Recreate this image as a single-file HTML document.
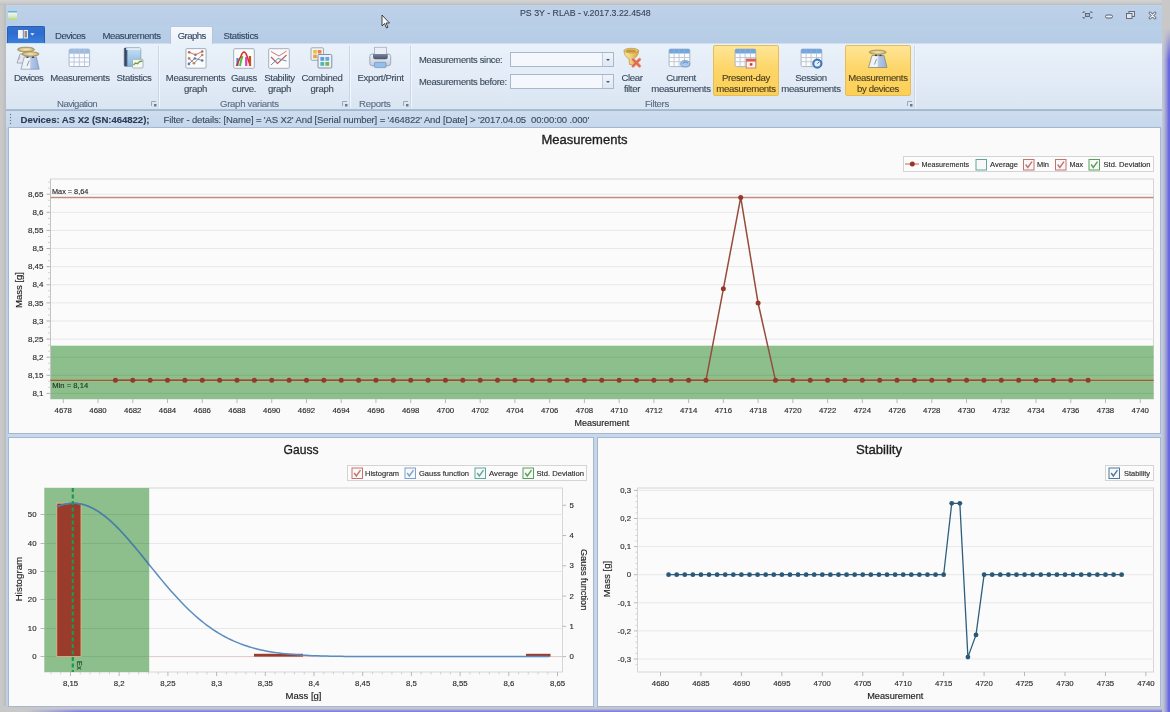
<!DOCTYPE html>
<html><head><meta charset="utf-8">
<style>
*{box-sizing:border-box;margin:0;padding:0}
html,body{width:1170px;height:712px;overflow:hidden;background:linear-gradient(to bottom,#d2d2d2 0,#c4c4c4 5px,#c8c8c8 40px);font-family:"Liberation Sans",sans-serif;color:#333}
.a{position:absolute}
#root{position:absolute;left:0;top:0;width:1170px;height:712px;will-change:transform}
.t{position:absolute;white-space:nowrap;line-height:1;-webkit-text-stroke:0.12px currentColor}
body{-webkit-font-smoothing:antialiased}
#rstrip{display:none}
#rstrip2{left:1162px;top:0;width:8px;height:712px;background:linear-gradient(to bottom,#c8c8c8 0,#c8c8c8 28px,rgba(200,200,200,0) 60px),linear-gradient(to right,#c6cad4 0,#b8bcd4 2px,#9494da 4.5px,#6c6ce0 6.5px,#6262e0 8px)}
#bstrip{left:0;top:706px;width:1162px;height:6px;background:linear-gradient(to right,#c8c8c8 0px,#c8c8c8 25px,rgba(200,200,200,0) 80px),linear-gradient(to bottom,rgba(200,200,204,0) 0px,rgba(196,198,210,0) 2.5px,#7474e2 6px),#c4c6d0}
#win{left:6px;top:5px;width:1156px;height:701px;background:#bcd0e8}
#title{left:6px;top:5px;width:1156px;height:20px;background:linear-gradient(to bottom,#bed2ea,#b8cde6)}
#tabs{left:6px;top:25px;width:1156px;height:18px;background:linear-gradient(to bottom,#bad0e8,#b6cce6)}
#ribbon{left:6px;top:43px;width:1156px;height:67px;background:linear-gradient(to bottom,#e9f1fa 0,#e3ecf7 50%,#dae5f2 100%);border-top:1px solid #d0dff0;border-bottom:1px solid #a9bdd6}
#status{left:6px;top:110px;width:1156px;height:18px;background:linear-gradient(to bottom,#cfdef0,#c5d7ec)}
.panel{position:absolute;background:#fafafa;border:1px solid #a6b6cc}
.sep{position:absolute;width:1px;background:#c8d6e8;box-shadow:1px 0 0 #f2f6fb}
.rb{font-size:9.6px;color:#3b4a5c;letter-spacing:-0.35px;text-align:center}
.gl{font-size:9.6px;color:#5a6c84;letter-spacing:-0.3px}
.ybtn{position:absolute;border:1px solid #e5bd5a;border-radius:2px;background:linear-gradient(to bottom,#fee596 0%,#fdd66a 45%,#fccf55 100%)}
</style></head>
<body><div id="root">
<div class="a" style="left:0;top:0;width:6px;height:712px;background:linear-gradient(to right,#cacaca 0,#c6c6c6 3px,#bababa 6px)"></div>
<div class="a" style="left:0;top:0;width:1170px;height:5px;background:linear-gradient(to bottom,#d4d4d4 0,#cacaca 3px,#bcbcbc 5px)"></div>
<div id="win" class="a"></div>
<div id="title" class="a"></div>
<div id="tabs" class="a"></div>
<div id="ribbon" class="a"></div>
<div id="status" class="a"></div>
<div id="rstrip2" class="a"></div>
<div id="rstrip" class="a"></div>
<div id="bstrip" class="a"></div>

<!-- title bar -->
<div class="a" style="left:8px;top:11px;width:9px;height:9px;background:linear-gradient(to bottom,#60b4dc 0,#60b4dc 1px,#eef6ea 2px,#dcecc8 5px,#b4d490 9px)"></div>
<div class="t" style="left:520px;top:9px;font-size:8.8px;color:#3a4656">PS 3Y - RLAB - v.2017.3.22.4548</div>


<!-- tabs -->
<div class="a" style="left:7px;top:26px;width:38px;height:17px;border-radius:2px 2px 0 0;background:linear-gradient(to bottom,#3472cc 0,#2d6cd0 40%,#3a80dc 100%);border:1px solid #2a5cb4;border-bottom:none"></div>
<svg class="a" style="left:17px;top:29px" width="20" height="11" viewBox="0 0 20 11">
 <rect x="1" y="1" width="5" height="8.5" fill="#f4f4f2"/>
 <rect x="6.5" y="1" width="4.5" height="8.5" fill="#f4f4f2"/>
 <rect x="7.5" y="2" width="2.6" height="6.5" fill="#8e8e88"/>
 <line x1="6.2" y1="1" x2="6.2" y2="9.5" stroke="#7a8090" stroke-width="0.6"/>
 <path d="M13.2 4.3 L17.6 4.3 L15.4 6.6 Z" fill="#e8f0fa"/>
</svg>
<div class="t" style="left:55px;top:30.5px;font-size:9.6px;color:#33475f;letter-spacing:-0.55px">Devices</div>
<div class="t" style="left:102.5px;top:30.5px;font-size:9.6px;color:#33475f;letter-spacing:-0.45px">Measurements</div>
<div class="a" style="left:170px;top:26px;width:43px;height:18px;border-radius:2px 2px 0 0;background:linear-gradient(to bottom,#f6f9fd,#eaf1f9);border:1px solid #b4c6dc;border-bottom:none"></div>
<div class="t" style="left:177.7px;top:30.5px;font-size:9.6px;color:#33475f;letter-spacing:-0.55px">Graphs</div>
<div class="t" style="left:223.4px;top:30.5px;font-size:9.6px;color:#33475f;letter-spacing:-0.35px">Statistics</div>

<!-- ribbon group separators -->
<div class="sep" style="left:158px;top:46px;height:62px"></div>
<div class="sep" style="left:349px;top:46px;height:62px"></div>
<div class="sep" style="left:410px;top:46px;height:62px"></div>
<div class="sep" style="left:914px;top:46px;height:62px"></div>

<!-- Navigation group -->
<svg class="a" style="left:16px;top:46px" width="24" height="24" viewBox="0 0 24 24">
 <defs>
  <radialGradient id="pan" cx="0.5" cy="0.5" r="0.55"><stop offset="0" stop-color="#f4e6bc"/><stop offset="0.6" stop-color="#d8c48c"/><stop offset="1" stop-color="#9c8650"/></radialGradient>
  <linearGradient id="bod" x1="0" x2="1" y1="0" y2="0"><stop offset="0" stop-color="#e8eef8"/><stop offset="0.45" stop-color="#f4f7fb"/><stop offset="0.55" stop-color="#b4c8e8"/><stop offset="1" stop-color="#94b0dc"/></linearGradient>
 </defs>
 <path d="M4 8 L10 8 L9 17 L1 17 Z" fill="#e4e8ee" stroke="#8a94a4" stroke-width="0.7"/>
 <ellipse cx="10" cy="3.5" rx="8.6" ry="2.4" fill="url(#pan)" stroke="#9c8650" stroke-width="0.6"/>
 <path d="M8.2 11 L20.4 11 L23.2 23.2 L5 23.2 Z" fill="url(#bod)" stroke="#8494ac" stroke-width="0.7"/>
 <rect x="10.5" y="10.3" width="2" height="1.6" fill="#3a4250"/><rect x="16" y="10.3" width="2" height="1.6" fill="#3a4250"/>
 <ellipse cx="14.5" cy="8" rx="8.6" ry="2.3" fill="url(#pan)" stroke="#9c8650" stroke-width="0.6"/>
 <path d="M11 20 L13.2 14.5" stroke="#8a8a80" stroke-width="0.9"/>
 <path d="M2.6 14 L4 10.5" stroke="#a0a0a0" stroke-width="0.7"/>
</svg>
<svg class="a" style="left:68px;top:48px" width="23" height="20" viewBox="0 0 23 20">
 <rect x="1.1" y="1.1" width="20.5" height="17.4" rx="1.5" fill="#fbfcfe" stroke="#a0b0c8" stroke-width="0.9"/>
 <rect x="1.1" y="1.1" width="20.5" height="4.2" rx="1" fill="#9cbce4"/>
 <path d="M6.1 1.1 V18.5 M11.3 1.1 V18.5 M16.5 1.1 V18.5 M1.1 5.4 H21.6 M1.1 9.7 H21.6 M1.1 14 H21.6" stroke="#b4c4dc" stroke-width="0.9"/>
</svg>
<svg class="a" style="left:123px;top:47px" width="21" height="22" viewBox="0 0 21 22">
 <defs><linearGradient id="bksp" x1="0" x2="1" y1="0" y2="0"><stop offset="0" stop-color="#5a6a82"/><stop offset="0.5" stop-color="#2e3c54"/><stop offset="1" stop-color="#6a8ab0"/></linearGradient>
 <linearGradient id="bkcv" x1="0" x2="0" y1="0" y2="1"><stop offset="0" stop-color="#c4e0f6"/><stop offset="1" stop-color="#88b8dc"/></linearGradient></defs>
 <rect x="1.1" y="0.7" width="16.7" height="18.7" rx="1.5" fill="url(#bkcv)" stroke="#8898ac" stroke-width="0.7"/>
 <rect x="1.1" y="1" width="3.5" height="18.2" fill="url(#bksp)"/>
 <rect x="3" y="1.3" width="14.5" height="1.6" fill="#e8eef6"/>
 <rect x="9.5" y="12.3" width="10.5" height="8.7" rx="0.8" fill="#f4f8f0" stroke="#98a4b4" stroke-width="0.8"/>
 <path d="M10.5 18 L12.5 16 L14.5 16.8 L16.5 14.5 L19.5 14" stroke="#6a9a40" stroke-width="1.3" fill="none"/>
</svg>
<div class="t rb" style="left:13.5px;top:73px;width:30px;letter-spacing:-0.72px">Devices</div>
<div class="t rb" style="left:50px;top:73px;width:60px">Measurements</div>
<div class="t rb" style="left:115px;top:73px;width:38px">Statistics</div>
<div class="t gl" style="left:57px;top:99px;letter-spacing:-0.53px">Navigation</div>

<!-- Graph variants group -->
<svg class="a" style="left:185px;top:48px" width="22" height="21" viewBox="0 0 22 21">
 <rect x="0.9" y="0.6" width="20.2" height="19.6" rx="1" fill="#fafbfc" stroke="#a4aebb" stroke-width="1"/>
 <path d="M4.2 4.3 L10.4 6.8 L17.2 3.5" stroke="#c87868" stroke-width="1" fill="none"/>
 <path d="M4.1 10.4 L9 15.3 L17.2 7" stroke="#b88a68" stroke-width="1" fill="none"/>
 <path d="M3.9 15.9 L9.8 10.4 L17.2 12.5" stroke="#6a88b8" stroke-width="1" fill="none"/>
 <g fill="#b86858"><circle cx="4.2" cy="4.3" r="1.3"/><circle cx="10.4" cy="6.8" r="1.3"/><circle cx="17.2" cy="3.5" r="1.3"/></g>
 <g fill="#b08868"><circle cx="4.1" cy="10.4" r="1.3"/><circle cx="9" cy="15.3" r="1.3"/><circle cx="17.2" cy="7" r="1.3"/></g>
 <g fill="#5a78a8"><circle cx="3.9" cy="15.9" r="1.3"/><circle cx="9.8" cy="10.4" r="1.2"/><circle cx="17.2" cy="12.5" r="1.3"/></g>
</svg>
<svg class="a" style="left:233px;top:48px" width="22" height="21" viewBox="0 0 22 21">
 <rect x="0.7" y="0.7" width="20.6" height="19.6" rx="1" fill="#fafbfc" stroke="#a4aebb" stroke-width="1"/>
 <path d="M4.5 18 V10" stroke="#3a8ae0" stroke-width="2.2"/>
 <path d="M7 18 Q8 12 9.5 8" stroke="#50c040" stroke-width="2"/>
 <path d="M3.5 18 Q6 12 8 8 Q11 0 14 8 Q15.5 13 17.5 18" stroke="#d83020" stroke-width="1.6" fill="none"/>
 <path d="M13.2 18 V9" stroke="#e040c0" stroke-width="2.2"/>
 <path d="M17 18 V8" stroke="#c85020" stroke-width="2.2"/>
</svg>
<svg class="a" style="left:268px;top:48px" width="22" height="21" viewBox="0 0 22 21">
 <rect x="0.7" y="0.7" width="20.6" height="19.6" rx="1" fill="#fafbfc" stroke="#a4aebb" stroke-width="1"/>
 <path d="M3 3.5 L11 8 L18.5 3" stroke="#d07868" stroke-width="1" fill="none"/>
 <path d="M3 9 L9.5 15.5 L18.5 7" stroke="#b86050" stroke-width="1.1" fill="none"/>
 <path d="M3 17 L10 10.5 L18.5 13" stroke="#6a8cc0" stroke-width="1" fill="none"/>
</svg>
<svg class="a" style="left:310px;top:47px" width="23" height="22" viewBox="0 0 23 22">
 <rect x="1" y="0.8" width="12.5" height="12.5" rx="1" fill="#f4f2ec" stroke="#a0a8b4" stroke-width="1"/>
 <rect x="3.2" y="3" width="3.6" height="3.6" fill="#e8c040"/><rect x="7.8" y="3" width="3.6" height="3.6" fill="#e88050"/>
 <rect x="3.2" y="7.6" width="3.6" height="3.6" fill="#e8a040"/>
 <rect x="8" y="7.5" width="13.8" height="13.5" rx="1" fill="#eef2f6" stroke="#8090a8" stroke-width="1"/>
 <rect x="10.4" y="10" width="3.8" height="3.8" fill="#5aa0e0"/><rect x="15.4" y="10" width="3.8" height="3.8" fill="#60a8e0"/>
 <rect x="10.4" y="15" width="3.8" height="3.8" fill="#50b8b0"/><rect x="15.4" y="15" width="3.8" height="3.8" fill="#80b050"/>
</svg>
<div class="t rb" style="left:164px;top:73px;width:63px">Measurements</div>
<div class="t rb" style="left:164px;top:84px;width:63px">graph</div>
<div class="t rb" style="left:229px;top:73px;width:30px">Gauss</div>
<div class="t rb" style="left:229px;top:84px;width:30px">curve.</div>
<div class="t rb" style="left:261px;top:73px;width:37px">Stability</div>
<div class="t rb" style="left:261px;top:84px;width:37px">graph</div>
<div class="t rb" style="left:300px;top:73px;width:44px">Combined</div>
<div class="t rb" style="left:300px;top:84px;width:44px">graph</div>
<div class="t gl" style="left:220px;top:99px">Graph variants</div>

<!-- Reports group -->
<svg class="a" style="left:368px;top:46px" width="24" height="23" viewBox="0 0 24 23">
 <defs><linearGradient id="prb" x1="0" x2="0" y1="0" y2="1"><stop offset="0" stop-color="#eef2f8"/><stop offset="1" stop-color="#c4cedc"/></linearGradient>
 <linearGradient id="prd" x1="0" x2="0" y1="0" y2="1"><stop offset="0" stop-color="#7a869a"/><stop offset="1" stop-color="#46546c"/></linearGradient></defs>
 <rect x="1.8" y="8" width="20.9" height="11.8" rx="2.5" fill="url(#prb)" stroke="#8e9aac" stroke-width="0.8"/>
 <rect x="6.4" y="1.3" width="12" height="8" fill="#eaeef6" stroke="#a8b0bc" stroke-width="0.8"/>
 <path d="M5 8 H19.8 V11 Q19.8 13.2 17.6 13.2 H7.2 Q5 13.2 5 11 Z" fill="url(#prd)"/>
 <rect x="6.4" y="16.3" width="11.6" height="5.3" rx="1" fill="#92c0ea" stroke="#7896bc" stroke-width="0.8"/>
</svg>
<div class="t rb" style="left:354px;top:73px;width:53px">Export/Print</div>
<div class="t gl" style="left:359px;top:99px">Reports</div>


<!-- Filters group -->
<div class="t" style="left:419px;top:55px;font-size:9.4px;color:#3b4a5c;letter-spacing:-0.3px">Measurements since:</div>
<div class="t" style="left:419px;top:77px;font-size:9.4px;color:#3b4a5c;letter-spacing:-0.3px">Measurements before:</div>
<div class="a" style="left:510px;top:52px;width:104px;height:15px;background:#f4f7fb;border:1px solid #a8b8cc"></div>
<div class="a" style="left:602px;top:53px;width:11px;height:13px;background:linear-gradient(to bottom,#f0f4f9,#dfe7f1);border-left:1px solid #c0ccda"></div>
<div class="a" style="left:606px;top:59px;width:0;height:0;border-left:2px solid transparent;border-right:2px solid transparent;border-top:2px solid #4a5666"></div>
<div class="a" style="left:510px;top:74px;width:104px;height:15px;background:#f4f7fb;border:1px solid #a8b8cc"></div>
<div class="a" style="left:602px;top:75px;width:11px;height:13px;background:linear-gradient(to bottom,#f0f4f9,#dfe7f1);border-left:1px solid #c0ccda"></div>
<div class="a" style="left:606px;top:81px;width:0;height:0;border-left:2px solid transparent;border-right:2px solid transparent;border-top:2px solid #4a5666"></div>

<svg class="a" style="left:622px;top:47px" width="21" height="22" viewBox="0 0 21 22">
 <defs><linearGradient id="fun" x1="0" x2="1" y1="0" y2="0"><stop offset="0" stop-color="#f8e8a8"/><stop offset="0.5" stop-color="#f0cc70"/><stop offset="1" stop-color="#d8a840"/></linearGradient></defs>
 <path d="M2 3.5 Q2 9 7 12 L7.5 17.5 L11.5 17.5 L11.5 12 Q16.6 9 16.6 3.5 Z" fill="url(#fun)" stroke="#b89040" stroke-width="0.7"/>
 <ellipse cx="9.3" cy="3.6" rx="7.2" ry="2.3" fill="#e8c878" stroke="#b89040" stroke-width="0.7"/>
 <ellipse cx="9" cy="4" rx="5" ry="1.4" fill="#c89838"/>
 <path d="M11 12.5 L17.5 19 M17.5 12.5 L11 19" stroke="#f0b8a0" stroke-width="3.6" stroke-linecap="round"/>
 <path d="M11 12.5 L17.5 19 M17.5 12.5 L11 19" stroke="#de6a52" stroke-width="2.4" stroke-linecap="round"/>
</svg>
<div class="t rb" style="left:618px;top:73px;width:28px">Clear</div>
<div class="t rb" style="left:618px;top:84px;width:28px">filter</div>

<svg class="a" style="left:668px;top:48px" width="23" height="21" viewBox="0 0 23 21">
 <rect x="1.1" y="1.1" width="20.7" height="17.5" rx="1.5" fill="#fbfcfe" stroke="#a4aebe" stroke-width="0.9"/>
 <rect x="1.1" y="1.1" width="20.7" height="4.3" rx="1" fill="#74a6dc"/>
 <path d="M6.1 5.4 V18.6 M11.1 5.4 V18.6 M16.5 5.4 V18.6 M1.1 9.5 H21.8 M1.1 13.7 H21.8" stroke="#bcc4d0" stroke-width="0.9"/>
 <path d="M6.1 1.1 V5.4 M11.1 1.1 V5.4 M16.5 1.1 V5.4" stroke="#8ab4e2" stroke-width="0.6"/>
 <ellipse cx="17.2" cy="15.8" rx="4.6" ry="3.2" fill="#a8c8ec" stroke="#6890c4" stroke-width="0.8"/><path d="M14.5 15.5 Q17 12.5 20 15" stroke="#4a78b8" stroke-width="0.8" fill="none"/>
</svg>
<div class="t rb" style="left:650px;top:73px;width:62px">Current</div>
<div class="t rb" style="left:650px;top:84px;width:62px">measurements</div>

<div class="ybtn" style="left:713px;top:45px;width:66px;height:51px"></div>
<svg class="a" style="left:734px;top:48px" width="23" height="21" viewBox="0 0 23 21">
 <rect x="1.1" y="1.1" width="20.7" height="17.5" rx="1.5" fill="#fbfcfe" stroke="#a4aebe" stroke-width="0.9"/>
 <rect x="1.1" y="1.1" width="20.7" height="4.3" rx="1" fill="#74a6dc"/>
 <path d="M6.1 5.4 V18.6 M11.1 5.4 V18.6 M16.5 5.4 V18.6 M1.1 9.5 H21.8 M1.1 13.7 H21.8" stroke="#bcc4d0" stroke-width="0.9"/>
 <path d="M6.1 1.1 V5.4 M11.1 1.1 V5.4 M16.5 1.1 V5.4" stroke="#8ab4e2" stroke-width="0.6"/>
 <rect x="12.2" y="11" width="9.6" height="9" fill="#fbf4f2" stroke="#c07060" stroke-width="0.8"/><rect x="12.2" y="11" width="9.6" height="2.6" fill="#d86050"/><rect x="15.8" y="15.2" width="2.6" height="2.4" fill="#c83828"/>
</svg>
<div class="t rb" style="left:716px;top:73px;width:60px;color:#4a4020">Present-day</div>
<div class="t rb" style="left:716px;top:84px;width:60px;color:#4a4020">measurements</div>

<svg class="a" style="left:800px;top:48px" width="23" height="21" viewBox="0 0 23 21">
 <rect x="1.1" y="1.1" width="20.7" height="17.5" rx="1.5" fill="#fbfcfe" stroke="#a4aebe" stroke-width="0.9"/>
 <rect x="1.1" y="1.1" width="20.7" height="4.3" rx="1" fill="#74a6dc"/>
 <path d="M6.1 5.4 V18.6 M11.1 5.4 V18.6 M16.5 5.4 V18.6 M1.1 9.5 H21.8 M1.1 13.7 H21.8" stroke="#bcc4d0" stroke-width="0.9"/>
 <path d="M6.1 1.1 V5.4 M11.1 1.1 V5.4 M16.5 1.1 V5.4" stroke="#8ab4e2" stroke-width="0.6"/>
 <circle cx="17.3" cy="15.6" r="4.6" fill="#4a88d0" stroke="#2a5898" stroke-width="0.8"/><circle cx="17.3" cy="15.6" r="2.9" fill="#e8f0fa"/><path d="M17.3 15.6 L19.2 13.8" stroke="#2a5898" stroke-width="0.9"/>
</svg>
<div class="t rb" style="left:780px;top:73px;width:62px">Session</div>
<div class="t rb" style="left:780px;top:84px;width:62px">measurements</div>

<div class="ybtn" style="left:845px;top:45px;width:66px;height:51px"></div>
<svg class="a" style="left:866px;top:48px" width="24" height="22" viewBox="0 0 24 22">
 <path d="M6 7.5 L18 7.5 L21 19.5 L2.5 19.5 Z" fill="url(#bod)" stroke="#8a8a70" stroke-width="0.8"/>
 <rect x="9" y="6.5" width="2" height="1.6" fill="#3a4250"/><rect x="13.5" y="6.5" width="2" height="1.6" fill="#3a4250"/>
 <ellipse cx="11.7" cy="4.2" rx="8.6" ry="2.2" fill="url(#pan)" stroke="#9c8650" stroke-width="0.6"/>
 <path d="M8.5 16.5 L10.5 11" stroke="#8a8a80" stroke-width="0.9"/>
</svg>
<div class="t rb" style="left:846px;top:73px;width:64px;color:#4a4020">Measurements</div>
<div class="t rb" style="left:846px;top:84px;width:64px;color:#4a4020">by devices</div>
<div class="t gl" style="left:645px;top:99px">Filters</div>

<!-- dialog launchers -->
<svg class="a" style="left:151px;top:101px" width="6" height="6"><path d="M0.5 5 V0.5 H5" stroke="#9aa8ba" fill="none"/><rect x="3" y="3" width="2.5" height="2.5" fill="#6a7a90"/></svg>
<svg class="a" style="left:342px;top:101px" width="6" height="6"><path d="M0.5 5 V0.5 H5" stroke="#9aa8ba" fill="none"/><rect x="3" y="3" width="2.5" height="2.5" fill="#6a7a90"/></svg>
<svg class="a" style="left:403px;top:101px" width="6" height="6"><path d="M0.5 5 V0.5 H5" stroke="#9aa8ba" fill="none"/><rect x="3" y="3" width="2.5" height="2.5" fill="#6a7a90"/></svg>
<svg class="a" style="left:907px;top:101px" width="6" height="6"><path d="M0.5 5 V0.5 H5" stroke="#9aa8ba" fill="none"/><rect x="3" y="3" width="2.5" height="2.5" fill="#6a7a90"/></svg>

<!-- title bar buttons -->
<svg class="a" style="left:1080px;top:9px" width="80" height="12" viewBox="0 0 80 12">
 <path d="M3 4 V3 H5 M10 3 H12 V4 M12 8 V9 H10 M5 9 H3 V8" stroke="#5a6270" stroke-width="1" fill="none"/>
 <rect x="5.5" y="4.5" width="4" height="3" fill="#aab4c2" stroke="#5a6270" stroke-width="0.9"/>
 <rect x="25.5" y="6" width="7" height="3" rx="1.5" fill="#eef2f8" stroke="#5a6270" stroke-width="1"/>
 <rect x="49" y="2.5" width="5.5" height="5" fill="#dfe6ee" stroke="#5a6270" stroke-width="0.9"/>
 <rect x="46.5" y="4.5" width="5.5" height="5" fill="#dfe6ee" stroke="#5a6270" stroke-width="0.9"/>
 <path d="M70 4 L75 9 M75 4 L70 9" stroke="#5a6270" stroke-width="2.8" stroke-linecap="round"/>
 <path d="M70 4 L75 9 M75 4 L70 9" stroke="#eef2f8" stroke-width="1.1" stroke-linecap="round"/>
</svg>
<!-- mouse cursor -->
<svg class="a" style="left:381px;top:14px" width="10" height="15" viewBox="0 0 10 15">
 <path d="M1 1 L1 12 L3.5 9.5 L5.5 14 L7 13.3 L5 9 L8.5 9 Z" fill="#f8f8f8" stroke="#303030" stroke-width="0.9"/>
</svg>

<!-- status bar -->
<div class="a" style="left:6px;top:110px;width:1156px;height:1px;background:#a3b6ce"></div>
<svg class="a" style="left:9px;top:113px" width="3" height="12"><circle cx="1.5" cy="1.5" r="0.7" fill="#6a7a94"/><circle cx="1.5" cy="4.5" r="0.7" fill="#6a7a94"/><circle cx="1.5" cy="7.5" r="0.7" fill="#6a7a94"/><circle cx="1.5" cy="10.5" r="0.7" fill="#6a7a94"/></svg>
<div class="t" style="left:20.5px;top:114.5px;font-size:9.6px;font-weight:bold;color:#2a3a54;letter-spacing:-0.05px">Devices: AS X2 (SN:464822);</div>
<div class="t" style="left:163.5px;top:115px;font-size:9.5px;color:#3c4a5e;letter-spacing:-0.125px">Filter - details: [Name] = 'AS X2' And [Serial number] = '464822' And [Date] &gt; '2017.04.05&nbsp; 00:00:00 .000'</div>

<!-- panels -->
<div class="panel" style="left:8px;top:127px;width:1153px;height:307px"></div>
<div class="a" style="left:8px;top:434px;width:1153px;height:4px;background:#c8d8ec;border-bottom:1px solid #a8b8cc"></div>
<div class="panel" style="left:8px;top:437px;width:586px;height:270px"></div>
<div class="a" style="left:593px;top:437px;width:5px;height:270px;background:#c6d6ea;border-left:1px solid #a8b8cc;border-right:1px solid #a8b8cc"></div>
<div class="panel" style="left:597px;top:437px;width:564px;height:270px"></div>

<!--CHARTS-->
<svg class="a" style="left:0;top:0" width="1170" height="712" viewBox="0 0 1170 712">
<text x="541.5" y="144" font-family="Liberation Sans" font-size="13.6" fill="#1e1e1e" stroke="#1e1e1e" stroke-width="0.35" textLength="86" lengthAdjust="spacingAndGlyphs">Measurements</text>
<rect x="903.5" y="156.5" width="250" height="15" fill="#fcfcfc" stroke="#d4d4d4"/>
<line x1="905" y1="164" x2="919" y2="164" stroke="#b06a5a" stroke-width="1"/><circle cx="912.3" cy="164" r="2.5" fill="#963828"/>
<text stroke="#2e2e2e" stroke-width="0.15" x="921.5" y="167.3" font-family="Liberation Sans" font-size="7.6" fill="#2e2e2e" textLength="47.5" lengthAdjust="spacingAndGlyphs">Measurements</text>
<rect x="976" y="159.5" width="10.5" height="10.5" fill="#f8f8f8" stroke="#5aa89a" stroke-width="1"/>
<text stroke="#2e2e2e" stroke-width="0.15" x="990" y="167.3" font-family="Liberation Sans" font-size="7.6" fill="#2e2e2e" textLength="28" lengthAdjust="spacingAndGlyphs">Average</text>
<rect x="1023.5" y="159.5" width="10.5" height="10.5" fill="#f8f8f8" stroke="#c8706a" stroke-width="1"/><path d="M1025.7 164.5 L1027.8 167.5 L1032.0 161.7" stroke="#c8706a" stroke-width="1.4" fill="none"/>
<text stroke="#2e2e2e" stroke-width="0.15" x="1037" y="167.3" font-family="Liberation Sans" font-size="7.6" fill="#2e2e2e" textLength="12" lengthAdjust="spacingAndGlyphs">Min</text>
<rect x="1055.5" y="159.5" width="10.5" height="10.5" fill="#f8f8f8" stroke="#c8706a" stroke-width="1"/><path d="M1057.7 164.5 L1059.8 167.5 L1064.0 161.7" stroke="#c8706a" stroke-width="1.4" fill="none"/>
<text stroke="#2e2e2e" stroke-width="0.15" x="1069.5" y="167.3" font-family="Liberation Sans" font-size="7.6" fill="#2e2e2e" textLength="13.5" lengthAdjust="spacingAndGlyphs">Max</text>
<rect x="1089" y="159.5" width="10.5" height="10.5" fill="#f8f8f8" stroke="#58a058" stroke-width="1"/><path d="M1091.2 164.5 L1093.3 167.5 L1097.5 161.7" stroke="#58a058" stroke-width="1.4" fill="none"/>
<text stroke="#2e2e2e" stroke-width="0.15" x="1103.5" y="167.3" font-family="Liberation Sans" font-size="7.6" fill="#2e2e2e" textLength="47" lengthAdjust="spacingAndGlyphs">Std. Deviation</text>
<rect x="50.5" y="179" width="1103.0" height="220" fill="#fbfbfb" stroke="#d6d6d6" stroke-width="1"/>
<rect x="50.5" y="345.7" width="1103.0" height="53.30000000000001" fill="#8dbf8d"/>
<line x1="50.5" y1="393.41" x2="1153.5" y2="393.41" stroke="#7fb27f" stroke-width="1"/>
<text stroke="#2c2c2c" stroke-width="0.15" x="43.5" y="396.11" text-anchor="end" font-family="Liberation Sans" font-size="8" fill="#2c2c2c">8,1</text>
<line x1="46.5" y1="393.41" x2="50.5" y2="393.41" stroke="#b0b0b0" stroke-width="1"/>
<line x1="50.5" y1="375.3" x2="1153.5" y2="375.3" stroke="#7fb27f" stroke-width="1"/>
<text stroke="#2c2c2c" stroke-width="0.15" x="43.5" y="378" text-anchor="end" font-family="Liberation Sans" font-size="8" fill="#2c2c2c">8,15</text>
<line x1="46.5" y1="375.3" x2="50.5" y2="375.3" stroke="#b0b0b0" stroke-width="1"/>
<line x1="50.5" y1="357.19" x2="1153.5" y2="357.19" stroke="#7fb27f" stroke-width="1"/>
<text stroke="#2c2c2c" stroke-width="0.15" x="43.5" y="359.89" text-anchor="end" font-family="Liberation Sans" font-size="8" fill="#2c2c2c">8,2</text>
<line x1="46.5" y1="357.19" x2="50.5" y2="357.19" stroke="#b0b0b0" stroke-width="1"/>
<line x1="50.5" y1="339.08" x2="1153.5" y2="339.08" stroke="#e8e8e8" stroke-width="1"/>
<text stroke="#2c2c2c" stroke-width="0.15" x="43.5" y="341.78" text-anchor="end" font-family="Liberation Sans" font-size="8" fill="#2c2c2c">8,25</text>
<line x1="46.5" y1="339.08" x2="50.5" y2="339.08" stroke="#b0b0b0" stroke-width="1"/>
<line x1="50.5" y1="320.97" x2="1153.5" y2="320.97" stroke="#e8e8e8" stroke-width="1"/>
<text stroke="#2c2c2c" stroke-width="0.15" x="43.5" y="323.67" text-anchor="end" font-family="Liberation Sans" font-size="8" fill="#2c2c2c">8,3</text>
<line x1="46.5" y1="320.97" x2="50.5" y2="320.97" stroke="#b0b0b0" stroke-width="1"/>
<line x1="50.5" y1="302.86" x2="1153.5" y2="302.86" stroke="#e8e8e8" stroke-width="1"/>
<text stroke="#2c2c2c" stroke-width="0.15" x="43.5" y="305.56" text-anchor="end" font-family="Liberation Sans" font-size="8" fill="#2c2c2c">8,35</text>
<line x1="46.5" y1="302.86" x2="50.5" y2="302.86" stroke="#b0b0b0" stroke-width="1"/>
<line x1="50.5" y1="284.75" x2="1153.5" y2="284.75" stroke="#e8e8e8" stroke-width="1"/>
<text stroke="#2c2c2c" stroke-width="0.15" x="43.5" y="287.45" text-anchor="end" font-family="Liberation Sans" font-size="8" fill="#2c2c2c">8,4</text>
<line x1="46.5" y1="284.75" x2="50.5" y2="284.75" stroke="#b0b0b0" stroke-width="1"/>
<line x1="50.5" y1="266.64" x2="1153.5" y2="266.64" stroke="#e8e8e8" stroke-width="1"/>
<text stroke="#2c2c2c" stroke-width="0.15" x="43.5" y="269.34" text-anchor="end" font-family="Liberation Sans" font-size="8" fill="#2c2c2c">8,45</text>
<line x1="46.5" y1="266.64" x2="50.5" y2="266.64" stroke="#b0b0b0" stroke-width="1"/>
<line x1="50.5" y1="248.53" x2="1153.5" y2="248.53" stroke="#e8e8e8" stroke-width="1"/>
<text stroke="#2c2c2c" stroke-width="0.15" x="43.5" y="251.23" text-anchor="end" font-family="Liberation Sans" font-size="8" fill="#2c2c2c">8,5</text>
<line x1="46.5" y1="248.53" x2="50.5" y2="248.53" stroke="#b0b0b0" stroke-width="1"/>
<line x1="50.5" y1="230.42" x2="1153.5" y2="230.42" stroke="#e8e8e8" stroke-width="1"/>
<text stroke="#2c2c2c" stroke-width="0.15" x="43.5" y="233.12" text-anchor="end" font-family="Liberation Sans" font-size="8" fill="#2c2c2c">8,55</text>
<line x1="46.5" y1="230.42" x2="50.5" y2="230.42" stroke="#b0b0b0" stroke-width="1"/>
<line x1="50.5" y1="212.31" x2="1153.5" y2="212.31" stroke="#e8e8e8" stroke-width="1"/>
<text stroke="#2c2c2c" stroke-width="0.15" x="43.5" y="215.01" text-anchor="end" font-family="Liberation Sans" font-size="8" fill="#2c2c2c">8,6</text>
<line x1="46.5" y1="212.31" x2="50.5" y2="212.31" stroke="#b0b0b0" stroke-width="1"/>
<line x1="50.5" y1="194.2" x2="1153.5" y2="194.2" stroke="#e8e8e8" stroke-width="1"/>
<text stroke="#2c2c2c" stroke-width="0.15" x="43.5" y="196.9" text-anchor="end" font-family="Liberation Sans" font-size="8" fill="#2c2c2c">8,65</text>
<line x1="46.5" y1="194.2" x2="50.5" y2="194.2" stroke="#b0b0b0" stroke-width="1"/>
<line x1="48" y1="387.37" x2="50.5" y2="387.37" stroke="#c8c8c8" stroke-width="0.8"/>
<line x1="48" y1="381.34" x2="50.5" y2="381.34" stroke="#c8c8c8" stroke-width="0.8"/>
<line x1="48" y1="369.26" x2="50.5" y2="369.26" stroke="#c8c8c8" stroke-width="0.8"/>
<line x1="48" y1="363.23" x2="50.5" y2="363.23" stroke="#c8c8c8" stroke-width="0.8"/>
<line x1="48" y1="351.15" x2="50.5" y2="351.15" stroke="#c8c8c8" stroke-width="0.8"/>
<line x1="48" y1="345.12" x2="50.5" y2="345.12" stroke="#c8c8c8" stroke-width="0.8"/>
<line x1="48" y1="333.04" x2="50.5" y2="333.04" stroke="#c8c8c8" stroke-width="0.8"/>
<line x1="48" y1="327.01" x2="50.5" y2="327.01" stroke="#c8c8c8" stroke-width="0.8"/>
<line x1="48" y1="314.93" x2="50.5" y2="314.93" stroke="#c8c8c8" stroke-width="0.8"/>
<line x1="48" y1="308.9" x2="50.5" y2="308.9" stroke="#c8c8c8" stroke-width="0.8"/>
<line x1="48" y1="296.82" x2="50.5" y2="296.82" stroke="#c8c8c8" stroke-width="0.8"/>
<line x1="48" y1="290.79" x2="50.5" y2="290.79" stroke="#c8c8c8" stroke-width="0.8"/>
<line x1="48" y1="278.71" x2="50.5" y2="278.71" stroke="#c8c8c8" stroke-width="0.8"/>
<line x1="48" y1="272.68" x2="50.5" y2="272.68" stroke="#c8c8c8" stroke-width="0.8"/>
<line x1="48" y1="260.6" x2="50.5" y2="260.6" stroke="#c8c8c8" stroke-width="0.8"/>
<line x1="48" y1="254.57" x2="50.5" y2="254.57" stroke="#c8c8c8" stroke-width="0.8"/>
<line x1="48" y1="242.49" x2="50.5" y2="242.49" stroke="#c8c8c8" stroke-width="0.8"/>
<line x1="48" y1="236.46" x2="50.5" y2="236.46" stroke="#c8c8c8" stroke-width="0.8"/>
<line x1="48" y1="224.38" x2="50.5" y2="224.38" stroke="#c8c8c8" stroke-width="0.8"/>
<line x1="48" y1="218.35" x2="50.5" y2="218.35" stroke="#c8c8c8" stroke-width="0.8"/>
<line x1="48" y1="206.27" x2="50.5" y2="206.27" stroke="#c8c8c8" stroke-width="0.8"/>
<line x1="48" y1="200.24" x2="50.5" y2="200.24" stroke="#c8c8c8" stroke-width="0.8"/>
<line x1="48" y1="188.16" x2="50.5" y2="188.16" stroke="#c8c8c8" stroke-width="0.8"/>
<line x1="48" y1="182.13" x2="50.5" y2="182.13" stroke="#c8c8c8" stroke-width="0.8"/>
<line x1="50.5" y1="179" x2="50.5" y2="399" stroke="#c4c4c4" stroke-width="1"/>
<line x1="63.3" y1="399" x2="63.3" y2="403" stroke="#b8b8b8" stroke-width="1"/>
<text stroke="#2c2c2c" stroke-width="0.15" x="63.3" y="412.8" text-anchor="middle" font-family="Liberation Sans" font-size="7.8" fill="#2c2c2c">4678</text>
<line x1="98.04" y1="399" x2="98.04" y2="403" stroke="#b8b8b8" stroke-width="1"/>
<text stroke="#2c2c2c" stroke-width="0.15" x="98.04" y="412.8" text-anchor="middle" font-family="Liberation Sans" font-size="7.8" fill="#2c2c2c">4680</text>
<line x1="132.78" y1="399" x2="132.78" y2="403" stroke="#b8b8b8" stroke-width="1"/>
<text stroke="#2c2c2c" stroke-width="0.15" x="132.78" y="412.8" text-anchor="middle" font-family="Liberation Sans" font-size="7.8" fill="#2c2c2c">4682</text>
<line x1="167.52" y1="399" x2="167.52" y2="403" stroke="#b8b8b8" stroke-width="1"/>
<text stroke="#2c2c2c" stroke-width="0.15" x="167.52" y="412.8" text-anchor="middle" font-family="Liberation Sans" font-size="7.8" fill="#2c2c2c">4684</text>
<line x1="202.26" y1="399" x2="202.26" y2="403" stroke="#b8b8b8" stroke-width="1"/>
<text stroke="#2c2c2c" stroke-width="0.15" x="202.26" y="412.8" text-anchor="middle" font-family="Liberation Sans" font-size="7.8" fill="#2c2c2c">4686</text>
<line x1="237" y1="399" x2="237" y2="403" stroke="#b8b8b8" stroke-width="1"/>
<text stroke="#2c2c2c" stroke-width="0.15" x="237" y="412.8" text-anchor="middle" font-family="Liberation Sans" font-size="7.8" fill="#2c2c2c">4688</text>
<line x1="271.74" y1="399" x2="271.74" y2="403" stroke="#b8b8b8" stroke-width="1"/>
<text stroke="#2c2c2c" stroke-width="0.15" x="271.74" y="412.8" text-anchor="middle" font-family="Liberation Sans" font-size="7.8" fill="#2c2c2c">4690</text>
<line x1="306.48" y1="399" x2="306.48" y2="403" stroke="#b8b8b8" stroke-width="1"/>
<text stroke="#2c2c2c" stroke-width="0.15" x="306.48" y="412.8" text-anchor="middle" font-family="Liberation Sans" font-size="7.8" fill="#2c2c2c">4692</text>
<line x1="341.22" y1="399" x2="341.22" y2="403" stroke="#b8b8b8" stroke-width="1"/>
<text stroke="#2c2c2c" stroke-width="0.15" x="341.22" y="412.8" text-anchor="middle" font-family="Liberation Sans" font-size="7.8" fill="#2c2c2c">4694</text>
<line x1="375.96" y1="399" x2="375.96" y2="403" stroke="#b8b8b8" stroke-width="1"/>
<text stroke="#2c2c2c" stroke-width="0.15" x="375.96" y="412.8" text-anchor="middle" font-family="Liberation Sans" font-size="7.8" fill="#2c2c2c">4696</text>
<line x1="410.7" y1="399" x2="410.7" y2="403" stroke="#b8b8b8" stroke-width="1"/>
<text stroke="#2c2c2c" stroke-width="0.15" x="410.7" y="412.8" text-anchor="middle" font-family="Liberation Sans" font-size="7.8" fill="#2c2c2c">4698</text>
<line x1="445.44" y1="399" x2="445.44" y2="403" stroke="#b8b8b8" stroke-width="1"/>
<text stroke="#2c2c2c" stroke-width="0.15" x="445.44" y="412.8" text-anchor="middle" font-family="Liberation Sans" font-size="7.8" fill="#2c2c2c">4700</text>
<line x1="480.18" y1="399" x2="480.18" y2="403" stroke="#b8b8b8" stroke-width="1"/>
<text stroke="#2c2c2c" stroke-width="0.15" x="480.18" y="412.8" text-anchor="middle" font-family="Liberation Sans" font-size="7.8" fill="#2c2c2c">4702</text>
<line x1="514.92" y1="399" x2="514.92" y2="403" stroke="#b8b8b8" stroke-width="1"/>
<text stroke="#2c2c2c" stroke-width="0.15" x="514.92" y="412.8" text-anchor="middle" font-family="Liberation Sans" font-size="7.8" fill="#2c2c2c">4704</text>
<line x1="549.66" y1="399" x2="549.66" y2="403" stroke="#b8b8b8" stroke-width="1"/>
<text stroke="#2c2c2c" stroke-width="0.15" x="549.66" y="412.8" text-anchor="middle" font-family="Liberation Sans" font-size="7.8" fill="#2c2c2c">4706</text>
<line x1="584.4" y1="399" x2="584.4" y2="403" stroke="#b8b8b8" stroke-width="1"/>
<text stroke="#2c2c2c" stroke-width="0.15" x="584.4" y="412.8" text-anchor="middle" font-family="Liberation Sans" font-size="7.8" fill="#2c2c2c">4708</text>
<line x1="619.14" y1="399" x2="619.14" y2="403" stroke="#b8b8b8" stroke-width="1"/>
<text stroke="#2c2c2c" stroke-width="0.15" x="619.14" y="412.8" text-anchor="middle" font-family="Liberation Sans" font-size="7.8" fill="#2c2c2c">4710</text>
<line x1="653.88" y1="399" x2="653.88" y2="403" stroke="#b8b8b8" stroke-width="1"/>
<text stroke="#2c2c2c" stroke-width="0.15" x="653.88" y="412.8" text-anchor="middle" font-family="Liberation Sans" font-size="7.8" fill="#2c2c2c">4712</text>
<line x1="688.62" y1="399" x2="688.62" y2="403" stroke="#b8b8b8" stroke-width="1"/>
<text stroke="#2c2c2c" stroke-width="0.15" x="688.62" y="412.8" text-anchor="middle" font-family="Liberation Sans" font-size="7.8" fill="#2c2c2c">4714</text>
<line x1="723.36" y1="399" x2="723.36" y2="403" stroke="#b8b8b8" stroke-width="1"/>
<text stroke="#2c2c2c" stroke-width="0.15" x="723.36" y="412.8" text-anchor="middle" font-family="Liberation Sans" font-size="7.8" fill="#2c2c2c">4716</text>
<line x1="758.1" y1="399" x2="758.1" y2="403" stroke="#b8b8b8" stroke-width="1"/>
<text stroke="#2c2c2c" stroke-width="0.15" x="758.1" y="412.8" text-anchor="middle" font-family="Liberation Sans" font-size="7.8" fill="#2c2c2c">4718</text>
<line x1="792.84" y1="399" x2="792.84" y2="403" stroke="#b8b8b8" stroke-width="1"/>
<text stroke="#2c2c2c" stroke-width="0.15" x="792.84" y="412.8" text-anchor="middle" font-family="Liberation Sans" font-size="7.8" fill="#2c2c2c">4720</text>
<line x1="827.58" y1="399" x2="827.58" y2="403" stroke="#b8b8b8" stroke-width="1"/>
<text stroke="#2c2c2c" stroke-width="0.15" x="827.58" y="412.8" text-anchor="middle" font-family="Liberation Sans" font-size="7.8" fill="#2c2c2c">4722</text>
<line x1="862.32" y1="399" x2="862.32" y2="403" stroke="#b8b8b8" stroke-width="1"/>
<text stroke="#2c2c2c" stroke-width="0.15" x="862.32" y="412.8" text-anchor="middle" font-family="Liberation Sans" font-size="7.8" fill="#2c2c2c">4724</text>
<line x1="897.06" y1="399" x2="897.06" y2="403" stroke="#b8b8b8" stroke-width="1"/>
<text stroke="#2c2c2c" stroke-width="0.15" x="897.06" y="412.8" text-anchor="middle" font-family="Liberation Sans" font-size="7.8" fill="#2c2c2c">4726</text>
<line x1="931.8" y1="399" x2="931.8" y2="403" stroke="#b8b8b8" stroke-width="1"/>
<text stroke="#2c2c2c" stroke-width="0.15" x="931.8" y="412.8" text-anchor="middle" font-family="Liberation Sans" font-size="7.8" fill="#2c2c2c">4728</text>
<line x1="966.54" y1="399" x2="966.54" y2="403" stroke="#b8b8b8" stroke-width="1"/>
<text stroke="#2c2c2c" stroke-width="0.15" x="966.54" y="412.8" text-anchor="middle" font-family="Liberation Sans" font-size="7.8" fill="#2c2c2c">4730</text>
<line x1="1001.28" y1="399" x2="1001.28" y2="403" stroke="#b8b8b8" stroke-width="1"/>
<text stroke="#2c2c2c" stroke-width="0.15" x="1001.28" y="412.8" text-anchor="middle" font-family="Liberation Sans" font-size="7.8" fill="#2c2c2c">4732</text>
<line x1="1036.02" y1="399" x2="1036.02" y2="403" stroke="#b8b8b8" stroke-width="1"/>
<text stroke="#2c2c2c" stroke-width="0.15" x="1036.02" y="412.8" text-anchor="middle" font-family="Liberation Sans" font-size="7.8" fill="#2c2c2c">4734</text>
<line x1="1070.76" y1="399" x2="1070.76" y2="403" stroke="#b8b8b8" stroke-width="1"/>
<text stroke="#2c2c2c" stroke-width="0.15" x="1070.76" y="412.8" text-anchor="middle" font-family="Liberation Sans" font-size="7.8" fill="#2c2c2c">4736</text>
<line x1="1105.5" y1="399" x2="1105.5" y2="403" stroke="#b8b8b8" stroke-width="1"/>
<text stroke="#2c2c2c" stroke-width="0.15" x="1105.5" y="412.8" text-anchor="middle" font-family="Liberation Sans" font-size="7.8" fill="#2c2c2c">4738</text>
<line x1="1140.24" y1="399" x2="1140.24" y2="403" stroke="#b8b8b8" stroke-width="1"/>
<text stroke="#2c2c2c" stroke-width="0.15" x="1140.24" y="412.8" text-anchor="middle" font-family="Liberation Sans" font-size="7.8" fill="#2c2c2c">4740</text>
<text stroke="#222222" stroke-width="0.15" x="574.5" y="426.2" font-family="Liberation Sans" font-size="8.8" fill="#222222" textLength="54.7" lengthAdjust="spacingAndGlyphs">Measurement</text>
<text stroke="#222222" stroke-width="0.15" transform="translate(21.5,290) rotate(-90)" x="-18" font-family="Liberation Sans" font-size="8.8" fill="#222222" textLength="36" lengthAdjust="spacingAndGlyphs">Mass [g]</text>
<line x1="50.5" y1="197.5" x2="1153.5" y2="197.5" stroke="#c08a80" stroke-width="1.6"/>
<text stroke="#2a2a2a" stroke-width="0.15" x="52" y="194" font-family="Liberation Sans" font-size="7.3" fill="#2a2a2a">Max = 8,64</text>
<line x1="50.5" y1="380.3" x2="1153.5" y2="380.3" stroke="#c8b080" stroke-width="2.6"/>
<line x1="50.5" y1="380.3" x2="1153.5" y2="380.3" stroke="#6e4c2a" stroke-width="1.1"/>
<text stroke="#1a3a1a" stroke-width="0.15" x="52.2" y="388.3" font-family="Liberation Sans" font-size="7.4" fill="#1a3a1a" textLength="36" lengthAdjust="spacingAndGlyphs">Min = 8,14</text>
<polyline points="115.41,380.3 132.78,380.3 150.15,380.3 167.52,380.3 184.89,380.3 202.26,380.3 219.63,380.3 237,380.3 254.37,380.3 271.74,380.3 289.11,380.3 306.48,380.3 323.85,380.3 341.22,380.3 358.59,380.3 375.96,380.3 393.33,380.3 410.7,380.3 428.07,380.3 445.44,380.3 462.81,380.3 480.18,380.3 497.55,380.3 514.92,380.3 532.29,380.3 549.66,380.3 567.03,380.3 584.4,380.3 601.77,380.3 619.14,380.3 636.51,380.3 653.88,380.3 671.25,380.3 688.62,380.3 705.99,380.3 723.36,288.8 740.73,197.4 758.1,303 775.47,380.3 792.84,380.3 810.21,380.3 827.58,380.3 844.95,380.3 862.32,380.3 879.69,380.3 897.06,380.3 914.43,380.3 931.8,380.3 949.17,380.3 966.54,380.3 983.91,380.3 1001.28,380.3 1018.65,380.3 1036.02,380.3 1053.39,380.3 1070.76,380.3 1088.13,380.3" fill="none" stroke="#964c3c" stroke-width="1.5"/>
<circle cx="115.41" cy="380.3" r="2.5" fill="#963828"/>
<circle cx="132.78" cy="380.3" r="2.5" fill="#963828"/>
<circle cx="150.15" cy="380.3" r="2.5" fill="#963828"/>
<circle cx="167.52" cy="380.3" r="2.5" fill="#963828"/>
<circle cx="184.89" cy="380.3" r="2.5" fill="#963828"/>
<circle cx="202.26" cy="380.3" r="2.5" fill="#963828"/>
<circle cx="219.63" cy="380.3" r="2.5" fill="#963828"/>
<circle cx="237" cy="380.3" r="2.5" fill="#963828"/>
<circle cx="254.37" cy="380.3" r="2.5" fill="#963828"/>
<circle cx="271.74" cy="380.3" r="2.5" fill="#963828"/>
<circle cx="289.11" cy="380.3" r="2.5" fill="#963828"/>
<circle cx="306.48" cy="380.3" r="2.5" fill="#963828"/>
<circle cx="323.85" cy="380.3" r="2.5" fill="#963828"/>
<circle cx="341.22" cy="380.3" r="2.5" fill="#963828"/>
<circle cx="358.59" cy="380.3" r="2.5" fill="#963828"/>
<circle cx="375.96" cy="380.3" r="2.5" fill="#963828"/>
<circle cx="393.33" cy="380.3" r="2.5" fill="#963828"/>
<circle cx="410.7" cy="380.3" r="2.5" fill="#963828"/>
<circle cx="428.07" cy="380.3" r="2.5" fill="#963828"/>
<circle cx="445.44" cy="380.3" r="2.5" fill="#963828"/>
<circle cx="462.81" cy="380.3" r="2.5" fill="#963828"/>
<circle cx="480.18" cy="380.3" r="2.5" fill="#963828"/>
<circle cx="497.55" cy="380.3" r="2.5" fill="#963828"/>
<circle cx="514.92" cy="380.3" r="2.5" fill="#963828"/>
<circle cx="532.29" cy="380.3" r="2.5" fill="#963828"/>
<circle cx="549.66" cy="380.3" r="2.5" fill="#963828"/>
<circle cx="567.03" cy="380.3" r="2.5" fill="#963828"/>
<circle cx="584.4" cy="380.3" r="2.5" fill="#963828"/>
<circle cx="601.77" cy="380.3" r="2.5" fill="#963828"/>
<circle cx="619.14" cy="380.3" r="2.5" fill="#963828"/>
<circle cx="636.51" cy="380.3" r="2.5" fill="#963828"/>
<circle cx="653.88" cy="380.3" r="2.5" fill="#963828"/>
<circle cx="671.25" cy="380.3" r="2.5" fill="#963828"/>
<circle cx="688.62" cy="380.3" r="2.5" fill="#963828"/>
<circle cx="705.99" cy="380.3" r="2.5" fill="#963828"/>
<circle cx="723.36" cy="288.8" r="2.5" fill="#963828"/>
<circle cx="740.73" cy="197.4" r="2.5" fill="#963828"/>
<circle cx="758.1" cy="303" r="2.5" fill="#963828"/>
<circle cx="775.47" cy="380.3" r="2.5" fill="#963828"/>
<circle cx="792.84" cy="380.3" r="2.5" fill="#963828"/>
<circle cx="810.21" cy="380.3" r="2.5" fill="#963828"/>
<circle cx="827.58" cy="380.3" r="2.5" fill="#963828"/>
<circle cx="844.95" cy="380.3" r="2.5" fill="#963828"/>
<circle cx="862.32" cy="380.3" r="2.5" fill="#963828"/>
<circle cx="879.69" cy="380.3" r="2.5" fill="#963828"/>
<circle cx="897.06" cy="380.3" r="2.5" fill="#963828"/>
<circle cx="914.43" cy="380.3" r="2.5" fill="#963828"/>
<circle cx="931.8" cy="380.3" r="2.5" fill="#963828"/>
<circle cx="949.17" cy="380.3" r="2.5" fill="#963828"/>
<circle cx="966.54" cy="380.3" r="2.5" fill="#963828"/>
<circle cx="983.91" cy="380.3" r="2.5" fill="#963828"/>
<circle cx="1001.28" cy="380.3" r="2.5" fill="#963828"/>
<circle cx="1018.65" cy="380.3" r="2.5" fill="#963828"/>
<circle cx="1036.02" cy="380.3" r="2.5" fill="#963828"/>
<circle cx="1053.39" cy="380.3" r="2.5" fill="#963828"/>
<circle cx="1070.76" cy="380.3" r="2.5" fill="#963828"/>
<circle cx="1088.13" cy="380.3" r="2.5" fill="#963828"/>
<text x="283.6" y="453.8" font-family="Liberation Sans" font-size="13.6" fill="#1e1e1e" stroke="#1e1e1e" stroke-width="0.35" textLength="35" lengthAdjust="spacingAndGlyphs">Gauss</text>
<rect x="347.5" y="465.5" width="239" height="15" fill="#fcfcfc" stroke="#d4d4d4"/>
<rect x="352" y="468" width="10.5" height="10.5" fill="#f8f8f8" stroke="#c8706a" stroke-width="1"/><path d="M354.2 473 L356.3 476 L360.5 470.2" stroke="#c8706a" stroke-width="1.4" fill="none"/>
<text stroke="#2e2e2e" stroke-width="0.15" x="365" y="476.2" font-family="Liberation Sans" font-size="7.6" fill="#2e2e2e" textLength="34" lengthAdjust="spacingAndGlyphs">Histogram</text>
<rect x="405" y="468" width="10.5" height="10.5" fill="#f8f8f8" stroke="#7aa0d0" stroke-width="1"/><path d="M407.2 473 L409.3 476 L413.5 470.2" stroke="#7aa0d0" stroke-width="1.4" fill="none"/>
<text stroke="#2e2e2e" stroke-width="0.15" x="419" y="476.2" font-family="Liberation Sans" font-size="7.6" fill="#2e2e2e" textLength="50" lengthAdjust="spacingAndGlyphs">Gauss function</text>
<rect x="475" y="468" width="10.5" height="10.5" fill="#f8f8f8" stroke="#5aa89a" stroke-width="1"/><path d="M477.2 473 L479.3 476 L483.5 470.2" stroke="#5aa89a" stroke-width="1.4" fill="none"/>
<text stroke="#2e2e2e" stroke-width="0.15" x="489" y="476.2" font-family="Liberation Sans" font-size="7.6" fill="#2e2e2e" textLength="29" lengthAdjust="spacingAndGlyphs">Average</text>
<rect x="523" y="468" width="10.5" height="10.5" fill="#f8f8f8" stroke="#58a058" stroke-width="1"/><path d="M525.2 473 L527.3 476 L531.5 470.2" stroke="#58a058" stroke-width="1.4" fill="none"/>
<text stroke="#2e2e2e" stroke-width="0.15" x="536.5" y="476.2" font-family="Liberation Sans" font-size="7.6" fill="#2e2e2e" textLength="47.5" lengthAdjust="spacingAndGlyphs">Std. Deviation</text>
<rect x="44.5" y="488" width="518.0" height="184" fill="#fbfbfb" stroke="#d6d6d6" stroke-width="1"/>
<rect x="44.5" y="488" width="104.69999999999999" height="184" fill="#8dbf8d"/>
<line x1="149.2" y1="656.5" x2="562.5" y2="656.5" stroke="#e8e8e8" stroke-width="1"/>
<line x1="44.5" y1="656.5" x2="149.2" y2="656.5" stroke="#7fb07f" stroke-width="1"/>
<line x1="40.5" y1="656.5" x2="44.5" y2="656.5" stroke="#b8b8b8" stroke-width="1"/>
<text stroke="#2c2c2c" stroke-width="0.15" x="36.5" y="659.2" text-anchor="end" font-family="Liberation Sans" font-size="7.8" fill="#2c2c2c">0</text>
<line x1="149.2" y1="628.5" x2="562.5" y2="628.5" stroke="#e8e8e8" stroke-width="1"/>
<line x1="44.5" y1="628.5" x2="149.2" y2="628.5" stroke="#7fb07f" stroke-width="1"/>
<line x1="40.5" y1="628.5" x2="44.5" y2="628.5" stroke="#b8b8b8" stroke-width="1"/>
<text stroke="#2c2c2c" stroke-width="0.15" x="36.5" y="631.2" text-anchor="end" font-family="Liberation Sans" font-size="7.8" fill="#2c2c2c">10</text>
<line x1="149.2" y1="599.5" x2="562.5" y2="599.5" stroke="#e8e8e8" stroke-width="1"/>
<line x1="44.5" y1="599.5" x2="149.2" y2="599.5" stroke="#7fb07f" stroke-width="1"/>
<line x1="40.5" y1="599.5" x2="44.5" y2="599.5" stroke="#b8b8b8" stroke-width="1"/>
<text stroke="#2c2c2c" stroke-width="0.15" x="36.5" y="602.2" text-anchor="end" font-family="Liberation Sans" font-size="7.8" fill="#2c2c2c">20</text>
<line x1="149.2" y1="571.5" x2="562.5" y2="571.5" stroke="#e8e8e8" stroke-width="1"/>
<line x1="44.5" y1="571.5" x2="149.2" y2="571.5" stroke="#7fb07f" stroke-width="1"/>
<line x1="40.5" y1="571.5" x2="44.5" y2="571.5" stroke="#b8b8b8" stroke-width="1"/>
<text stroke="#2c2c2c" stroke-width="0.15" x="36.5" y="574.2" text-anchor="end" font-family="Liberation Sans" font-size="7.8" fill="#2c2c2c">30</text>
<line x1="149.2" y1="543.5" x2="562.5" y2="543.5" stroke="#e8e8e8" stroke-width="1"/>
<line x1="44.5" y1="543.5" x2="149.2" y2="543.5" stroke="#7fb07f" stroke-width="1"/>
<line x1="40.5" y1="543.5" x2="44.5" y2="543.5" stroke="#b8b8b8" stroke-width="1"/>
<text stroke="#2c2c2c" stroke-width="0.15" x="36.5" y="546.2" text-anchor="end" font-family="Liberation Sans" font-size="7.8" fill="#2c2c2c">40</text>
<line x1="149.2" y1="514.5" x2="562.5" y2="514.5" stroke="#e8e8e8" stroke-width="1"/>
<line x1="44.5" y1="514.5" x2="149.2" y2="514.5" stroke="#7fb07f" stroke-width="1"/>
<line x1="40.5" y1="514.5" x2="44.5" y2="514.5" stroke="#b8b8b8" stroke-width="1"/>
<text stroke="#2c2c2c" stroke-width="0.15" x="36.5" y="517.2" text-anchor="end" font-family="Liberation Sans" font-size="7.8" fill="#2c2c2c">50</text>
<line x1="562.5" y1="656.6" x2="566" y2="656.6" stroke="#b8b8b8" stroke-width="1"/>
<text stroke="#2c2c2c" stroke-width="0.15" x="569.5" y="659.3" font-family="Liberation Sans" font-size="7.8" fill="#2c2c2c">0</text>
<line x1="562.5" y1="626.33" x2="566" y2="626.33" stroke="#b8b8b8" stroke-width="1"/>
<text stroke="#2c2c2c" stroke-width="0.15" x="569.5" y="629.03" font-family="Liberation Sans" font-size="7.8" fill="#2c2c2c">1</text>
<line x1="562.5" y1="596.06" x2="566" y2="596.06" stroke="#b8b8b8" stroke-width="1"/>
<text stroke="#2c2c2c" stroke-width="0.15" x="569.5" y="598.76" font-family="Liberation Sans" font-size="7.8" fill="#2c2c2c">2</text>
<line x1="562.5" y1="565.79" x2="566" y2="565.79" stroke="#b8b8b8" stroke-width="1"/>
<text stroke="#2c2c2c" stroke-width="0.15" x="569.5" y="568.49" font-family="Liberation Sans" font-size="7.8" fill="#2c2c2c">3</text>
<line x1="562.5" y1="535.52" x2="566" y2="535.52" stroke="#b8b8b8" stroke-width="1"/>
<text stroke="#2c2c2c" stroke-width="0.15" x="569.5" y="538.22" font-family="Liberation Sans" font-size="7.8" fill="#2c2c2c">4</text>
<line x1="562.5" y1="505.25" x2="566" y2="505.25" stroke="#b8b8b8" stroke-width="1"/>
<text stroke="#2c2c2c" stroke-width="0.15" x="569.5" y="507.95" font-family="Liberation Sans" font-size="7.8" fill="#2c2c2c">5</text>
<line x1="149.2" y1="656.6" x2="562.5" y2="656.6" stroke="#e0c8c8" stroke-width="1"/>
<line x1="70.5" y1="672" x2="70.5" y2="676" stroke="#b8b8b8" stroke-width="1"/>
<text stroke="#2c2c2c" stroke-width="0.15" x="70.5" y="686" text-anchor="middle" font-family="Liberation Sans" font-size="7.8" fill="#2c2c2c">8,15</text>
<line x1="119.2" y1="672" x2="119.2" y2="676" stroke="#b8b8b8" stroke-width="1"/>
<text stroke="#2c2c2c" stroke-width="0.15" x="119.2" y="686" text-anchor="middle" font-family="Liberation Sans" font-size="7.8" fill="#2c2c2c">8,2</text>
<line x1="167.9" y1="672" x2="167.9" y2="676" stroke="#b8b8b8" stroke-width="1"/>
<text stroke="#2c2c2c" stroke-width="0.15" x="167.9" y="686" text-anchor="middle" font-family="Liberation Sans" font-size="7.8" fill="#2c2c2c">8,25</text>
<line x1="216.6" y1="672" x2="216.6" y2="676" stroke="#b8b8b8" stroke-width="1"/>
<text stroke="#2c2c2c" stroke-width="0.15" x="216.6" y="686" text-anchor="middle" font-family="Liberation Sans" font-size="7.8" fill="#2c2c2c">8,3</text>
<line x1="265.3" y1="672" x2="265.3" y2="676" stroke="#b8b8b8" stroke-width="1"/>
<text stroke="#2c2c2c" stroke-width="0.15" x="265.3" y="686" text-anchor="middle" font-family="Liberation Sans" font-size="7.8" fill="#2c2c2c">8,35</text>
<line x1="314" y1="672" x2="314" y2="676" stroke="#b8b8b8" stroke-width="1"/>
<text stroke="#2c2c2c" stroke-width="0.15" x="314" y="686" text-anchor="middle" font-family="Liberation Sans" font-size="7.8" fill="#2c2c2c">8,4</text>
<line x1="362.7" y1="672" x2="362.7" y2="676" stroke="#b8b8b8" stroke-width="1"/>
<text stroke="#2c2c2c" stroke-width="0.15" x="362.7" y="686" text-anchor="middle" font-family="Liberation Sans" font-size="7.8" fill="#2c2c2c">8,45</text>
<line x1="411.4" y1="672" x2="411.4" y2="676" stroke="#b8b8b8" stroke-width="1"/>
<text stroke="#2c2c2c" stroke-width="0.15" x="411.4" y="686" text-anchor="middle" font-family="Liberation Sans" font-size="7.8" fill="#2c2c2c">8,5</text>
<line x1="460.1" y1="672" x2="460.1" y2="676" stroke="#b8b8b8" stroke-width="1"/>
<text stroke="#2c2c2c" stroke-width="0.15" x="460.1" y="686" text-anchor="middle" font-family="Liberation Sans" font-size="7.8" fill="#2c2c2c">8,55</text>
<line x1="508.8" y1="672" x2="508.8" y2="676" stroke="#b8b8b8" stroke-width="1"/>
<text stroke="#2c2c2c" stroke-width="0.15" x="508.8" y="686" text-anchor="middle" font-family="Liberation Sans" font-size="7.8" fill="#2c2c2c">8,6</text>
<line x1="557.5" y1="672" x2="557.5" y2="676" stroke="#b8b8b8" stroke-width="1"/>
<text stroke="#2c2c2c" stroke-width="0.15" x="557.5" y="686" text-anchor="middle" font-family="Liberation Sans" font-size="7.8" fill="#2c2c2c">8,65</text>
<line x1="51.02" y1="672" x2="51.02" y2="674.5" stroke="#c8c8c8" stroke-width="0.8"/>
<line x1="60.76" y1="672" x2="60.76" y2="674.5" stroke="#c8c8c8" stroke-width="0.8"/>
<line x1="80.24" y1="672" x2="80.24" y2="674.5" stroke="#c8c8c8" stroke-width="0.8"/>
<line x1="89.98" y1="672" x2="89.98" y2="674.5" stroke="#c8c8c8" stroke-width="0.8"/>
<line x1="99.72" y1="672" x2="99.72" y2="674.5" stroke="#c8c8c8" stroke-width="0.8"/>
<line x1="109.46" y1="672" x2="109.46" y2="674.5" stroke="#c8c8c8" stroke-width="0.8"/>
<line x1="128.94" y1="672" x2="128.94" y2="674.5" stroke="#c8c8c8" stroke-width="0.8"/>
<line x1="138.68" y1="672" x2="138.68" y2="674.5" stroke="#c8c8c8" stroke-width="0.8"/>
<line x1="148.42" y1="672" x2="148.42" y2="674.5" stroke="#c8c8c8" stroke-width="0.8"/>
<line x1="158.16" y1="672" x2="158.16" y2="674.5" stroke="#c8c8c8" stroke-width="0.8"/>
<line x1="177.64" y1="672" x2="177.64" y2="674.5" stroke="#c8c8c8" stroke-width="0.8"/>
<line x1="187.38" y1="672" x2="187.38" y2="674.5" stroke="#c8c8c8" stroke-width="0.8"/>
<line x1="197.12" y1="672" x2="197.12" y2="674.5" stroke="#c8c8c8" stroke-width="0.8"/>
<line x1="206.86" y1="672" x2="206.86" y2="674.5" stroke="#c8c8c8" stroke-width="0.8"/>
<line x1="226.34" y1="672" x2="226.34" y2="674.5" stroke="#c8c8c8" stroke-width="0.8"/>
<line x1="236.08" y1="672" x2="236.08" y2="674.5" stroke="#c8c8c8" stroke-width="0.8"/>
<line x1="245.82" y1="672" x2="245.82" y2="674.5" stroke="#c8c8c8" stroke-width="0.8"/>
<line x1="255.56" y1="672" x2="255.56" y2="674.5" stroke="#c8c8c8" stroke-width="0.8"/>
<line x1="275.04" y1="672" x2="275.04" y2="674.5" stroke="#c8c8c8" stroke-width="0.8"/>
<line x1="284.78" y1="672" x2="284.78" y2="674.5" stroke="#c8c8c8" stroke-width="0.8"/>
<line x1="294.52" y1="672" x2="294.52" y2="674.5" stroke="#c8c8c8" stroke-width="0.8"/>
<line x1="304.26" y1="672" x2="304.26" y2="674.5" stroke="#c8c8c8" stroke-width="0.8"/>
<line x1="323.74" y1="672" x2="323.74" y2="674.5" stroke="#c8c8c8" stroke-width="0.8"/>
<line x1="333.48" y1="672" x2="333.48" y2="674.5" stroke="#c8c8c8" stroke-width="0.8"/>
<line x1="343.22" y1="672" x2="343.22" y2="674.5" stroke="#c8c8c8" stroke-width="0.8"/>
<line x1="352.96" y1="672" x2="352.96" y2="674.5" stroke="#c8c8c8" stroke-width="0.8"/>
<line x1="372.44" y1="672" x2="372.44" y2="674.5" stroke="#c8c8c8" stroke-width="0.8"/>
<line x1="382.18" y1="672" x2="382.18" y2="674.5" stroke="#c8c8c8" stroke-width="0.8"/>
<line x1="391.92" y1="672" x2="391.92" y2="674.5" stroke="#c8c8c8" stroke-width="0.8"/>
<line x1="401.66" y1="672" x2="401.66" y2="674.5" stroke="#c8c8c8" stroke-width="0.8"/>
<line x1="421.14" y1="672" x2="421.14" y2="674.5" stroke="#c8c8c8" stroke-width="0.8"/>
<line x1="430.88" y1="672" x2="430.88" y2="674.5" stroke="#c8c8c8" stroke-width="0.8"/>
<line x1="440.62" y1="672" x2="440.62" y2="674.5" stroke="#c8c8c8" stroke-width="0.8"/>
<line x1="450.36" y1="672" x2="450.36" y2="674.5" stroke="#c8c8c8" stroke-width="0.8"/>
<line x1="469.84" y1="672" x2="469.84" y2="674.5" stroke="#c8c8c8" stroke-width="0.8"/>
<line x1="479.58" y1="672" x2="479.58" y2="674.5" stroke="#c8c8c8" stroke-width="0.8"/>
<line x1="489.32" y1="672" x2="489.32" y2="674.5" stroke="#c8c8c8" stroke-width="0.8"/>
<line x1="499.06" y1="672" x2="499.06" y2="674.5" stroke="#c8c8c8" stroke-width="0.8"/>
<line x1="518.54" y1="672" x2="518.54" y2="674.5" stroke="#c8c8c8" stroke-width="0.8"/>
<line x1="528.28" y1="672" x2="528.28" y2="674.5" stroke="#c8c8c8" stroke-width="0.8"/>
<line x1="538.02" y1="672" x2="538.02" y2="674.5" stroke="#c8c8c8" stroke-width="0.8"/>
<line x1="547.76" y1="672" x2="547.76" y2="674.5" stroke="#c8c8c8" stroke-width="0.8"/>
<text stroke="#222222" stroke-width="0.15" x="285.5" y="699.2" font-family="Liberation Sans" font-size="8.8" fill="#222222" textLength="36" lengthAdjust="spacingAndGlyphs">Mass [g]</text>
<text stroke="#222222" stroke-width="0.15" transform="translate(21.5,579) rotate(-90)" x="-22.2" font-family="Liberation Sans" font-size="8.8" fill="#222222" textLength="44.4" lengthAdjust="spacingAndGlyphs">Histogram</text>
<text stroke="#222222" stroke-width="0.15" transform="translate(581,579.6) rotate(90)" x="-30.7" font-family="Liberation Sans" font-size="8.8" fill="#222222" textLength="61.4" lengthAdjust="spacingAndGlyphs">Gauss function</text>
<rect x="56.8" y="503.2" width="24.2" height="153.40000000000003" fill="#9b3b2c" stroke="#e8b890" stroke-width="0.8"/>
<rect x="254" y="653.8" width="49" height="2.8" fill="#9b3b2c"/>
<rect x="526" y="653.8" width="24.5" height="2.8" fill="#9b3b2c"/>
<polyline points="57,506.78 60,505.59 63,504.64 66,503.92 69,503.45 72,503.22 75,503.24 78,503.5 81,504.01 84,504.75 87,505.74 90,506.96 93,508.4 96,510.07 99,511.95 102,514.03 105,516.31 108,518.77 111,521.41 114,524.2 117,527.15 120,530.23 123,533.44 126,536.76 129,540.17 132,543.67 135,547.24 138,550.86 141,554.53 144,558.23 147,561.95 150,565.67 153,569.38 156,573.08 159,576.75 162,580.37 165,583.95 168,587.48 171,590.93 174,594.32 177,597.62 180,600.84 183,603.97 186,607 189,609.93 192,612.76 195,615.48 198,618.09 201,620.6 204,623 207,625.28 210,627.46 213,629.53 216,631.5 219,633.36 222,635.11 225,636.76 228,638.32 231,639.78 234,641.15 237,642.43 240,643.63 243,644.74 246,645.77 249,646.73 252,647.62 255,648.45 258,649.21 261,649.9 264,650.55 267,651.14 270,651.68 273,652.17 276,652.62 279,653.03 282,653.41 285,653.74 288,654.05 291,654.33 294,654.58 297,654.81 300,655.01 303,655.19 306,655.35 309,655.5 312,655.63 315,655.75 318,655.85 321,655.94 324,656.03 327,656.1 330,656.16 333,656.22 336,656.27 339,656.31 342,656.35 345,656.38 348,656.41 351,656.44 354,656.46 357,656.48 360,656.5 363,656.51 366,656.52 369,656.54 372,656.54 375,656.55 378,656.56 381,656.57 384,656.57 387,656.58 390,656.58 393,656.58 396,656.59 399,656.59 402,656.59 405,656.59 408,656.59 411,656.59 414,656.59 417,656.6 420,656.6 423,656.6 426,656.6 429,656.6 432,656.6 435,656.6 438,656.6 441,656.6 444,656.6 447,656.6 450,656.6 453,656.6 456,656.6 459,656.6 462,656.6 465,656.6 468,656.6 471,656.6 474,656.6 477,656.6 480,656.6 483,656.6 486,656.6 489,656.6 492,656.6 495,656.6 498,656.6 501,656.6 504,656.6 507,656.6 510,656.6 513,656.6 516,656.6 519,656.6 522,656.6 525,656.6 528,656.6 531,656.6 534,656.6 537,656.6 540,656.6 543,656.6 546,656.6 549,656.6" fill="none" stroke="#5a8cc0" stroke-width="1.5"/>
<clipPath id="bandclip"><rect x="44" y="488" width="105.2" height="184"/></clipPath>
<polyline clip-path="url(#bandclip)" points="57,506.78 60,505.59 63,504.64 66,503.92 69,503.45 72,503.22 75,503.24 78,503.5 81,504.01 84,504.75 87,505.74 90,506.96 93,508.4 96,510.07 99,511.95 102,514.03 105,516.31 108,518.77 111,521.41 114,524.2 117,527.15 120,530.23 123,533.44 126,536.76 129,540.17 132,543.67 135,547.24 138,550.86 141,554.53 144,558.23 147,561.95 150,565.67 153,569.38 156,573.08 159,576.75 162,580.37 165,583.95 168,587.48 171,590.93 174,594.32 177,597.62 180,600.84 183,603.97 186,607 189,609.93 192,612.76 195,615.48 198,618.09 201,620.6 204,623 207,625.28 210,627.46 213,629.53 216,631.5 219,633.36 222,635.11 225,636.76 228,638.32 231,639.78 234,641.15 237,642.43 240,643.63 243,644.74 246,645.77 249,646.73 252,647.62 255,648.45 258,649.21 261,649.9 264,650.55 267,651.14 270,651.68 273,652.17 276,652.62 279,653.03 282,653.41 285,653.74 288,654.05 291,654.33 294,654.58 297,654.81 300,655.01 303,655.19 306,655.35 309,655.5 312,655.63 315,655.75 318,655.85 321,655.94 324,656.03 327,656.1 330,656.16 333,656.22 336,656.27 339,656.31 342,656.35 345,656.38 348,656.41 351,656.44 354,656.46 357,656.48 360,656.5 363,656.51 366,656.52 369,656.54 372,656.54 375,656.55 378,656.56 381,656.57 384,656.57 387,656.58 390,656.58 393,656.58 396,656.59 399,656.59 402,656.59 405,656.59 408,656.59 411,656.59 414,656.59 417,656.6 420,656.6 423,656.6 426,656.6 429,656.6 432,656.6 435,656.6 438,656.6 441,656.6 444,656.6 447,656.6 450,656.6 453,656.6 456,656.6 459,656.6 462,656.6 465,656.6 468,656.6 471,656.6 474,656.6 477,656.6 480,656.6 483,656.6 486,656.6 489,656.6 492,656.6 495,656.6 498,656.6 501,656.6 504,656.6 507,656.6 510,656.6 513,656.6 516,656.6 519,656.6 522,656.6 525,656.6 528,656.6 531,656.6 534,656.6 537,656.6 540,656.6 543,656.6 546,656.6 549,656.6" fill="none" stroke="#4d7fa0" stroke-width="1.5"/>
<line x1="72.8" y1="488" x2="72.8" y2="672" stroke="#1a9a50" stroke-width="2.2" stroke-dasharray="4,2.5"/>
<text stroke="#1a4a2a" stroke-width="0.15" transform="translate(77,661) rotate(90)" font-family="Liberation Sans" font-size="7.5" fill="#1a4a2a">Ex</text>
<text x="856.1" y="453.8" font-family="Liberation Sans" font-size="13.6" fill="#1e1e1e" stroke="#1e1e1e" stroke-width="0.35" textLength="46" lengthAdjust="spacingAndGlyphs">Stability</text>
<rect x="1105.5" y="465.5" width="48" height="15" fill="#fcfcfc" stroke="#d4d4d4"/>
<rect x="1109" y="468" width="10.5" height="10.5" fill="#f8f8f8" stroke="#4a78a0" stroke-width="1"/><path d="M1111.2 473 L1113.3 476 L1117.5 470.2" stroke="#4a78a0" stroke-width="1.4" fill="none"/>
<text stroke="#2e2e2e" stroke-width="0.15" x="1124" y="476.2" font-family="Liberation Sans" font-size="7.6" fill="#2e2e2e" textLength="26" lengthAdjust="spacingAndGlyphs">Stability</text>
<rect x="637.5" y="488" width="516.0" height="184" fill="#fbfbfb" stroke="#d6d6d6" stroke-width="1"/>
<line x1="637.5" y1="659" x2="1153.5" y2="659" stroke="#e8e8e8" stroke-width="1"/>
<line x1="634" y1="659" x2="637.5" y2="659" stroke="#b8b8b8" stroke-width="1"/>
<text stroke="#2c2c2c" stroke-width="0.15" x="631" y="661.7" text-anchor="end" font-family="Liberation Sans" font-size="7.8" fill="#2c2c2c">-0,3</text>
<line x1="637.5" y1="630.9" x2="1153.5" y2="630.9" stroke="#e8e8e8" stroke-width="1"/>
<line x1="634" y1="630.9" x2="637.5" y2="630.9" stroke="#b8b8b8" stroke-width="1"/>
<text stroke="#2c2c2c" stroke-width="0.15" x="631" y="633.6" text-anchor="end" font-family="Liberation Sans" font-size="7.8" fill="#2c2c2c">-0,2</text>
<line x1="637.5" y1="602.8" x2="1153.5" y2="602.8" stroke="#e8e8e8" stroke-width="1"/>
<line x1="634" y1="602.8" x2="637.5" y2="602.8" stroke="#b8b8b8" stroke-width="1"/>
<text stroke="#2c2c2c" stroke-width="0.15" x="631" y="605.5" text-anchor="end" font-family="Liberation Sans" font-size="7.8" fill="#2c2c2c">-0,1</text>
<line x1="637.5" y1="574.7" x2="1153.5" y2="574.7" stroke="#e8e8e8" stroke-width="1"/>
<line x1="634" y1="574.7" x2="637.5" y2="574.7" stroke="#b8b8b8" stroke-width="1"/>
<text stroke="#2c2c2c" stroke-width="0.15" x="631" y="577.4" text-anchor="end" font-family="Liberation Sans" font-size="7.8" fill="#2c2c2c">0</text>
<line x1="637.5" y1="546.6" x2="1153.5" y2="546.6" stroke="#e8e8e8" stroke-width="1"/>
<line x1="634" y1="546.6" x2="637.5" y2="546.6" stroke="#b8b8b8" stroke-width="1"/>
<text stroke="#2c2c2c" stroke-width="0.15" x="631" y="549.3" text-anchor="end" font-family="Liberation Sans" font-size="7.8" fill="#2c2c2c">0,1</text>
<line x1="637.5" y1="518.5" x2="1153.5" y2="518.5" stroke="#e8e8e8" stroke-width="1"/>
<line x1="634" y1="518.5" x2="637.5" y2="518.5" stroke="#b8b8b8" stroke-width="1"/>
<text stroke="#2c2c2c" stroke-width="0.15" x="631" y="521.2" text-anchor="end" font-family="Liberation Sans" font-size="7.8" fill="#2c2c2c">0,2</text>
<line x1="637.5" y1="490.4" x2="1153.5" y2="490.4" stroke="#e8e8e8" stroke-width="1"/>
<line x1="634" y1="490.4" x2="637.5" y2="490.4" stroke="#b8b8b8" stroke-width="1"/>
<text stroke="#2c2c2c" stroke-width="0.15" x="631" y="493.1" text-anchor="end" font-family="Liberation Sans" font-size="7.8" fill="#2c2c2c">0,3</text>
<line x1="635.5" y1="664.62" x2="637.5" y2="664.62" stroke="#c8c8c8" stroke-width="0.8"/>
<line x1="635.5" y1="653.38" x2="637.5" y2="653.38" stroke="#c8c8c8" stroke-width="0.8"/>
<line x1="635.5" y1="647.76" x2="637.5" y2="647.76" stroke="#c8c8c8" stroke-width="0.8"/>
<line x1="635.5" y1="642.14" x2="637.5" y2="642.14" stroke="#c8c8c8" stroke-width="0.8"/>
<line x1="635.5" y1="636.52" x2="637.5" y2="636.52" stroke="#c8c8c8" stroke-width="0.8"/>
<line x1="635.5" y1="625.28" x2="637.5" y2="625.28" stroke="#c8c8c8" stroke-width="0.8"/>
<line x1="635.5" y1="619.66" x2="637.5" y2="619.66" stroke="#c8c8c8" stroke-width="0.8"/>
<line x1="635.5" y1="614.04" x2="637.5" y2="614.04" stroke="#c8c8c8" stroke-width="0.8"/>
<line x1="635.5" y1="608.42" x2="637.5" y2="608.42" stroke="#c8c8c8" stroke-width="0.8"/>
<line x1="635.5" y1="597.18" x2="637.5" y2="597.18" stroke="#c8c8c8" stroke-width="0.8"/>
<line x1="635.5" y1="591.56" x2="637.5" y2="591.56" stroke="#c8c8c8" stroke-width="0.8"/>
<line x1="635.5" y1="585.94" x2="637.5" y2="585.94" stroke="#c8c8c8" stroke-width="0.8"/>
<line x1="635.5" y1="580.32" x2="637.5" y2="580.32" stroke="#c8c8c8" stroke-width="0.8"/>
<line x1="635.5" y1="569.08" x2="637.5" y2="569.08" stroke="#c8c8c8" stroke-width="0.8"/>
<line x1="635.5" y1="563.46" x2="637.5" y2="563.46" stroke="#c8c8c8" stroke-width="0.8"/>
<line x1="635.5" y1="557.84" x2="637.5" y2="557.84" stroke="#c8c8c8" stroke-width="0.8"/>
<line x1="635.5" y1="552.22" x2="637.5" y2="552.22" stroke="#c8c8c8" stroke-width="0.8"/>
<line x1="635.5" y1="540.98" x2="637.5" y2="540.98" stroke="#c8c8c8" stroke-width="0.8"/>
<line x1="635.5" y1="535.36" x2="637.5" y2="535.36" stroke="#c8c8c8" stroke-width="0.8"/>
<line x1="635.5" y1="529.74" x2="637.5" y2="529.74" stroke="#c8c8c8" stroke-width="0.8"/>
<line x1="635.5" y1="524.12" x2="637.5" y2="524.12" stroke="#c8c8c8" stroke-width="0.8"/>
<line x1="635.5" y1="512.88" x2="637.5" y2="512.88" stroke="#c8c8c8" stroke-width="0.8"/>
<line x1="635.5" y1="507.26" x2="637.5" y2="507.26" stroke="#c8c8c8" stroke-width="0.8"/>
<line x1="635.5" y1="501.64" x2="637.5" y2="501.64" stroke="#c8c8c8" stroke-width="0.8"/>
<line x1="635.5" y1="496.02" x2="637.5" y2="496.02" stroke="#c8c8c8" stroke-width="0.8"/>
<line x1="660.5" y1="672" x2="660.5" y2="676" stroke="#b8b8b8" stroke-width="1"/>
<text stroke="#2c2c2c" stroke-width="0.15" x="660.5" y="686" text-anchor="middle" font-family="Liberation Sans" font-size="7.8" fill="#2c2c2c">4680</text>
<line x1="700.95" y1="672" x2="700.95" y2="676" stroke="#b8b8b8" stroke-width="1"/>
<text stroke="#2c2c2c" stroke-width="0.15" x="700.95" y="686" text-anchor="middle" font-family="Liberation Sans" font-size="7.8" fill="#2c2c2c">4685</text>
<line x1="741.4" y1="672" x2="741.4" y2="676" stroke="#b8b8b8" stroke-width="1"/>
<text stroke="#2c2c2c" stroke-width="0.15" x="741.4" y="686" text-anchor="middle" font-family="Liberation Sans" font-size="7.8" fill="#2c2c2c">4690</text>
<line x1="781.85" y1="672" x2="781.85" y2="676" stroke="#b8b8b8" stroke-width="1"/>
<text stroke="#2c2c2c" stroke-width="0.15" x="781.85" y="686" text-anchor="middle" font-family="Liberation Sans" font-size="7.8" fill="#2c2c2c">4695</text>
<line x1="822.3" y1="672" x2="822.3" y2="676" stroke="#b8b8b8" stroke-width="1"/>
<text stroke="#2c2c2c" stroke-width="0.15" x="822.3" y="686" text-anchor="middle" font-family="Liberation Sans" font-size="7.8" fill="#2c2c2c">4700</text>
<line x1="862.75" y1="672" x2="862.75" y2="676" stroke="#b8b8b8" stroke-width="1"/>
<text stroke="#2c2c2c" stroke-width="0.15" x="862.75" y="686" text-anchor="middle" font-family="Liberation Sans" font-size="7.8" fill="#2c2c2c">4705</text>
<line x1="903.2" y1="672" x2="903.2" y2="676" stroke="#b8b8b8" stroke-width="1"/>
<text stroke="#2c2c2c" stroke-width="0.15" x="903.2" y="686" text-anchor="middle" font-family="Liberation Sans" font-size="7.8" fill="#2c2c2c">4710</text>
<line x1="943.65" y1="672" x2="943.65" y2="676" stroke="#b8b8b8" stroke-width="1"/>
<text stroke="#2c2c2c" stroke-width="0.15" x="943.65" y="686" text-anchor="middle" font-family="Liberation Sans" font-size="7.8" fill="#2c2c2c">4715</text>
<line x1="984.1" y1="672" x2="984.1" y2="676" stroke="#b8b8b8" stroke-width="1"/>
<text stroke="#2c2c2c" stroke-width="0.15" x="984.1" y="686" text-anchor="middle" font-family="Liberation Sans" font-size="7.8" fill="#2c2c2c">4720</text>
<line x1="1024.55" y1="672" x2="1024.55" y2="676" stroke="#b8b8b8" stroke-width="1"/>
<text stroke="#2c2c2c" stroke-width="0.15" x="1024.55" y="686" text-anchor="middle" font-family="Liberation Sans" font-size="7.8" fill="#2c2c2c">4725</text>
<line x1="1065" y1="672" x2="1065" y2="676" stroke="#b8b8b8" stroke-width="1"/>
<text stroke="#2c2c2c" stroke-width="0.15" x="1065" y="686" text-anchor="middle" font-family="Liberation Sans" font-size="7.8" fill="#2c2c2c">4730</text>
<line x1="1105.45" y1="672" x2="1105.45" y2="676" stroke="#b8b8b8" stroke-width="1"/>
<text stroke="#2c2c2c" stroke-width="0.15" x="1105.45" y="686" text-anchor="middle" font-family="Liberation Sans" font-size="7.8" fill="#2c2c2c">4735</text>
<line x1="1145.9" y1="672" x2="1145.9" y2="676" stroke="#b8b8b8" stroke-width="1"/>
<text stroke="#2c2c2c" stroke-width="0.15" x="1145.9" y="686" text-anchor="middle" font-family="Liberation Sans" font-size="7.8" fill="#2c2c2c">4740</text>
<text stroke="#222222" stroke-width="0.15" x="867.2" y="699" font-family="Liberation Sans" font-size="8.8" fill="#222222" textLength="56.2" lengthAdjust="spacingAndGlyphs">Measurement</text>
<text stroke="#222222" stroke-width="0.15" transform="translate(610,579) rotate(-90)" x="-18.2" font-family="Liberation Sans" font-size="8.8" fill="#222222" textLength="36.5" lengthAdjust="spacingAndGlyphs">Mass [g]</text>
<polyline points="668.59,574.7 676.68,574.7 684.77,574.7 692.86,574.7 700.95,574.7 709.04,574.7 717.13,574.7 725.22,574.7 733.31,574.7 741.4,574.7 749.49,574.7 757.58,574.7 765.67,574.7 773.76,574.7 781.85,574.7 789.94,574.7 798.03,574.7 806.12,574.7 814.21,574.7 822.3,574.7 830.39,574.7 838.48,574.7 846.57,574.7 854.66,574.7 862.75,574.7 870.84,574.7 878.93,574.7 887.02,574.7 895.11,574.7 903.2,574.7 911.29,574.7 919.38,574.7 927.47,574.7 935.56,574.7 943.65,574.7 951.74,503.3 959.83,503.3 967.92,657.1 976.01,634.9 984.1,574.7 992.19,574.7 1000.28,574.7 1008.37,574.7 1016.46,574.7 1024.55,574.7 1032.64,574.7 1040.73,574.7 1048.82,574.7 1056.91,574.7 1065,574.7 1073.09,574.7 1081.18,574.7 1089.27,574.7 1097.36,574.7 1105.45,574.7 1113.54,574.7 1121.63,574.7" fill="none" stroke="#2e5d7e" stroke-width="1.3"/>
<circle cx="668.59" cy="574.7" r="2.4" fill="#2a5878"/>
<circle cx="676.68" cy="574.7" r="2.4" fill="#2a5878"/>
<circle cx="684.77" cy="574.7" r="2.4" fill="#2a5878"/>
<circle cx="692.86" cy="574.7" r="2.4" fill="#2a5878"/>
<circle cx="700.95" cy="574.7" r="2.4" fill="#2a5878"/>
<circle cx="709.04" cy="574.7" r="2.4" fill="#2a5878"/>
<circle cx="717.13" cy="574.7" r="2.4" fill="#2a5878"/>
<circle cx="725.22" cy="574.7" r="2.4" fill="#2a5878"/>
<circle cx="733.31" cy="574.7" r="2.4" fill="#2a5878"/>
<circle cx="741.4" cy="574.7" r="2.4" fill="#2a5878"/>
<circle cx="749.49" cy="574.7" r="2.4" fill="#2a5878"/>
<circle cx="757.58" cy="574.7" r="2.4" fill="#2a5878"/>
<circle cx="765.67" cy="574.7" r="2.4" fill="#2a5878"/>
<circle cx="773.76" cy="574.7" r="2.4" fill="#2a5878"/>
<circle cx="781.85" cy="574.7" r="2.4" fill="#2a5878"/>
<circle cx="789.94" cy="574.7" r="2.4" fill="#2a5878"/>
<circle cx="798.03" cy="574.7" r="2.4" fill="#2a5878"/>
<circle cx="806.12" cy="574.7" r="2.4" fill="#2a5878"/>
<circle cx="814.21" cy="574.7" r="2.4" fill="#2a5878"/>
<circle cx="822.3" cy="574.7" r="2.4" fill="#2a5878"/>
<circle cx="830.39" cy="574.7" r="2.4" fill="#2a5878"/>
<circle cx="838.48" cy="574.7" r="2.4" fill="#2a5878"/>
<circle cx="846.57" cy="574.7" r="2.4" fill="#2a5878"/>
<circle cx="854.66" cy="574.7" r="2.4" fill="#2a5878"/>
<circle cx="862.75" cy="574.7" r="2.4" fill="#2a5878"/>
<circle cx="870.84" cy="574.7" r="2.4" fill="#2a5878"/>
<circle cx="878.93" cy="574.7" r="2.4" fill="#2a5878"/>
<circle cx="887.02" cy="574.7" r="2.4" fill="#2a5878"/>
<circle cx="895.11" cy="574.7" r="2.4" fill="#2a5878"/>
<circle cx="903.2" cy="574.7" r="2.4" fill="#2a5878"/>
<circle cx="911.29" cy="574.7" r="2.4" fill="#2a5878"/>
<circle cx="919.38" cy="574.7" r="2.4" fill="#2a5878"/>
<circle cx="927.47" cy="574.7" r="2.4" fill="#2a5878"/>
<circle cx="935.56" cy="574.7" r="2.4" fill="#2a5878"/>
<circle cx="943.65" cy="574.7" r="2.4" fill="#2a5878"/>
<circle cx="951.74" cy="503.3" r="2.4" fill="#2a5878"/>
<circle cx="959.83" cy="503.3" r="2.4" fill="#2a5878"/>
<circle cx="967.92" cy="657.1" r="2.4" fill="#2a5878"/>
<circle cx="976.01" cy="634.9" r="2.4" fill="#2a5878"/>
<circle cx="984.1" cy="574.7" r="2.4" fill="#2a5878"/>
<circle cx="992.19" cy="574.7" r="2.4" fill="#2a5878"/>
<circle cx="1000.28" cy="574.7" r="2.4" fill="#2a5878"/>
<circle cx="1008.37" cy="574.7" r="2.4" fill="#2a5878"/>
<circle cx="1016.46" cy="574.7" r="2.4" fill="#2a5878"/>
<circle cx="1024.55" cy="574.7" r="2.4" fill="#2a5878"/>
<circle cx="1032.64" cy="574.7" r="2.4" fill="#2a5878"/>
<circle cx="1040.73" cy="574.7" r="2.4" fill="#2a5878"/>
<circle cx="1048.82" cy="574.7" r="2.4" fill="#2a5878"/>
<circle cx="1056.91" cy="574.7" r="2.4" fill="#2a5878"/>
<circle cx="1065" cy="574.7" r="2.4" fill="#2a5878"/>
<circle cx="1073.09" cy="574.7" r="2.4" fill="#2a5878"/>
<circle cx="1081.18" cy="574.7" r="2.4" fill="#2a5878"/>
<circle cx="1089.27" cy="574.7" r="2.4" fill="#2a5878"/>
<circle cx="1097.36" cy="574.7" r="2.4" fill="#2a5878"/>
<circle cx="1105.45" cy="574.7" r="2.4" fill="#2a5878"/>
<circle cx="1113.54" cy="574.7" r="2.4" fill="#2a5878"/>
<circle cx="1121.63" cy="574.7" r="2.4" fill="#2a5878"/>
</svg>
<!--/CHARTS-->
</div></body></html>
